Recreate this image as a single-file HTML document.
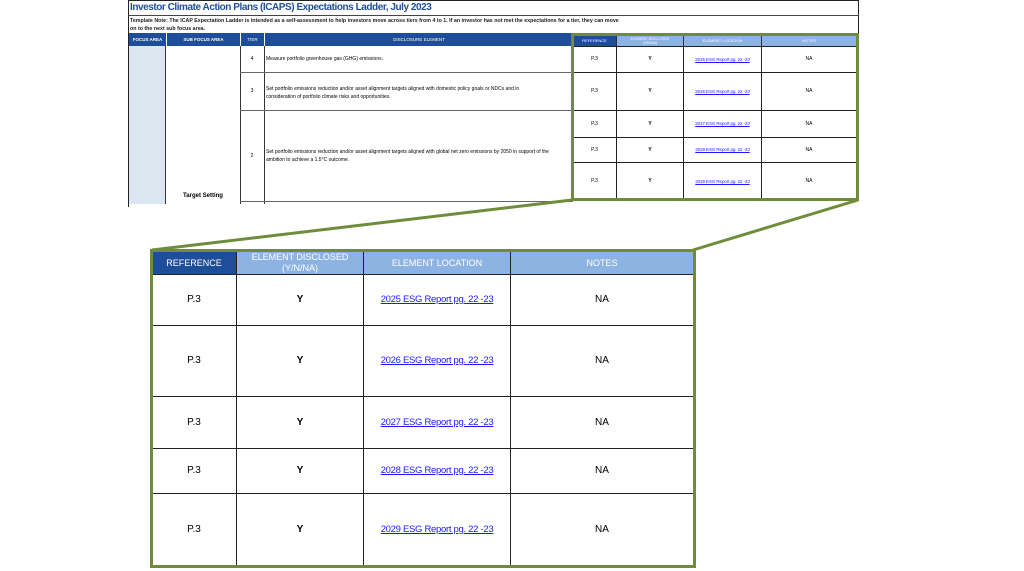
<!DOCTYPE html><html><head><style>
body{margin:0;width:1024px;height:571px;background:#fff;position:relative;overflow:hidden;font-family:"Liberation Sans",Arial,sans-serif}
.a{position:absolute;box-sizing:border-box}
.c{display:flex;align-items:center;justify-content:center;text-align:center}
.hl{background:#1f4e99;color:#fff}
.hb{background:#8db3e2;color:#fff}
a{color:#1a1aff;text-decoration:underline}
</style></head><body>
<div class="a" style="left:128px;top:0;width:731px;height:207px;border-left:1px solid #222;border-top:1px solid #222"></div>
<div class="a" style="left:858px;top:0;width:1px;height:33px;background:#222"></div>
<div class="a" style="left:130px;top:2px;font-size:10px;letter-spacing:-0.45px;font-weight:bold;color:#1f4e99">Investor Climate Action Plans (ICAPS) Expectations Ladder, July 2023</div>
<div class="a" style="left:128px;top:15px;width:731px;height:1px;background:#444"></div>
<div class="a" style="left:130px;top:17px;width:490px;font-size:5.3px;font-weight:bold;line-height:8px;color:#222">Template Note: The ICAP Expectation Ladder is intended as a self-assessment to help investors move across tiers from 4 to 1. If an investor has not met the expectations for a tier, they can move on to the next sub focus area.</div>
<div class="a hl c" style="left:129px;top:33px;width:444px;height:13px"></div>
<div class="a c" style="left:129px;top:33px;width:37px;height:13px;font-size:4.5px;color:#fff;font-weight:bold">FOCUS AREA</div>
<div class="a c" style="left:166px;top:33px;width:74px;height:13px;font-size:4.5px;color:#fff;font-weight:bold;border-left:1px solid #fff">SUB FOCUS AREA</div>
<div class="a c" style="left:240px;top:33px;width:24px;height:13px;font-size:4.5px;color:#fff;border-left:1px solid #fff">TIER</div>
<div class="a c" style="left:264px;top:33px;width:309px;height:13px;font-size:4.5px;color:#fff;border-left:1px solid #fff">DISCLOSURE ELEMENT</div>
<div class="a" style="left:129px;top:46px;width:37px;height:158px;background:#dce6f1;border-right:1px solid #333"></div>
<div class="a c" style="left:166px;top:193px;width:74px;font-size:6px;font-weight:bold">Target Setting</div>
<div class="a" style="left:240px;top:46px;width:1px;height:158px;background:#333"></div>
<div class="a" style="left:264px;top:46px;width:1px;height:158px;background:#333"></div>
<div class="a" style="left:240px;top:72px;width:333px;height:1px;background:#666"></div>
<div class="a" style="left:240px;top:110px;width:333px;height:1px;background:#666"></div>
<div class="a" style="left:240px;top:201px;width:333px;height:1px;background:#666"></div>
<div class="a c" style="left:240px;top:46px;width:24px;height:26px;font-size:5px">4</div>
<div class="a c" style="left:240px;top:72px;width:24px;height:38px;font-size:5px">3</div>
<div class="a c" style="left:240px;top:110px;width:24px;height:91px;font-size:5px">2</div>
<div class="a" style="left:266px;top:56px;font-size:5px">Measure portfolio greenhouse gas (GHG) emissions.</div>
<div class="a" style="left:266px;top:85px;width:280px;font-size:5px;line-height:8px">Set portfolio emissions reduction and/or asset alignment targets aligned with domestic policy goals or NDCs and in consideration of portfolio climate risks and opportunities.</div>
<div class="a" style="left:266px;top:148px;width:300px;font-size:5px;line-height:8px">Set portfolio emissions reduction and/or asset alignment targets aligned with global net zero emissions by 2050 in support of the ambition to achieve a 1.5°C outcome.</div>
<div class="a hl c" style="left:573px;top:35px;width:43px;height:11px;font-size:4px">REFERENCE</div>
<div class="a hb c" style="left:616px;top:35px;width:67px;height:11px;font-size:3.6px;line-height:4px;border-left:1px solid #333">ELEMENT DISCLOSED<br>(Y/N/NA)</div>
<div class="a hb c" style="left:683px;top:35px;width:78px;height:11px;font-size:4px;border-left:1px solid #333">ELEMENT LOCATION</div>
<div class="a hb c" style="left:761px;top:35px;width:95px;height:11px;font-size:4px;border-left:1px solid #333">NOTES</div>
<div id="small"></div>
<div class="a hl c" style="left:152px;top:251px;width:84px;height:23px;font-size:9px">REFERENCE</div>
<div class="a hb c" style="left:236px;top:251px;width:127px;height:23px;font-size:9px;line-height:11px;border-left:1px solid #222">ELEMENT DISCLOSED<br>(Y/N/NA)</div>
<div class="a hb c" style="left:363px;top:251px;width:147px;height:23px;font-size:9px;border-left:1px solid #222">ELEMENT LOCATION</div>
<div class="a hb c" style="left:510px;top:251px;width:183px;height:23px;font-size:9px;border-left:1px solid #222">NOTES</div>
<div id="big"></div>
<svg class="a" style="left:0;top:0" width="1024" height="571">
<g stroke="#6f8c3a" stroke-width="3" fill="none">
<rect x="572.5" y="34.5" width="285" height="165"/>
<line x1="572" y1="200" x2="152" y2="250"/>
<line x1="858" y1="200" x2="693" y2="250"/>
<rect x="151.5" y="250.5" width="543" height="316"/>
</g></svg>
<script>
function build(id,x,cols,rows,fs,lfs,ls){var s='';var xs=[x];cols.forEach(function(w){xs.push(xs[xs.length-1]+w)});
for(var i=0;i<rows.length-1;i++){var y=rows[i],hh=rows[i+1]-rows[i];
s+='<div class="a" style="left:'+xs[0]+'px;top:'+y+'px;width:'+(xs[4]-xs[0])+'px;height:1px;background:#222"></div>';
var t=['P.3','<b>Y</b>','<a style="letter-spacing:'+ls+'px">'+(2025+i)+' ESG Report pg. 22 -23</a>','NA'];
for(var j=0;j<4;j++){s+='<div class="a c" style="left:'+xs[j]+'px;top:'+y+'px;width:'+cols[j]+'px;height:'+hh+'px;font-size:'+(j==2?lfs:fs)+'px;'+(j>0?'border-left:1px solid #222':'')+'">'+t[j]+'</div>';}}
document.getElementById(id).outerHTML=s;}
build('small',573,[43,67,78,95],[46,72,110,137,162,200],5,4.5,-0.1);
build('big',152,[84,127,147,183],[274,325,396,448,493,566],10,9.5,-0.3);
</script>
</body></html>
